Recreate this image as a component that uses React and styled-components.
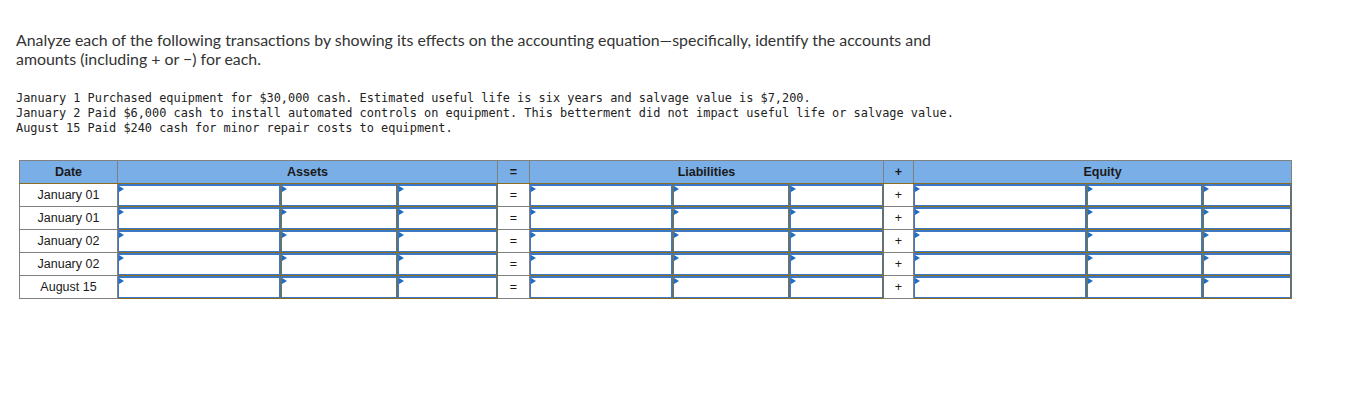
import React from 'react'
import styled, {createGlobalStyle} from 'styled-components'

const GlobalStyle = createGlobalStyle`
  body {
    margin: 0;
    background: #ffffff;
  }
`

const Page = styled.div`
  padding: 30px 16px 0 16px;
  font-family: Lato, 'Open Sans', Arial, sans-serif;
  color: #333333;
`

const Intro = styled.p`
  margin: 0;
  font-size: 15.9px;
  line-height: 19px;
  max-width: 935px;
`

const Transactions = styled.pre`
  margin: 23px 0 0 0;
  font-family: 'DejaVu Sans Mono', 'Liberation Mono', monospace;
  font-size: 11.9px;
  line-height: 15px;
  color: #222222;
`

const Table = styled.table`
  margin: 24px 0 0 3px;
  border-collapse: collapse;
  table-layout: fixed;
  width: 1272px;
  border: 1px solid #808080;
  font-family: 'Liberation Sans', Arial, sans-serif;
  font-size: 12.5px;
  color: #1a1a1a;
`

const Head = styled.th`
  background: #7aaee6;
  height: 22px;
  padding: 0;
  font-weight: bold;
  text-align: center;
  border: 1px solid #808080;
  border-bottom-color: #8b6d1f;
`

const DateCell = styled.td`
  height: 22px;
  padding: 0;
  text-align: center;
  border: 1px solid #808080;
  background: #ffffff;
`

const SignCell = styled.td`
  padding: 0;
  text-align: center;
  border: 1px solid #808080;
  border-left-color: #8b6d1f;
  background: #ffffff;
`

const InputCell = styled.td`
  padding: 0;
  height: 22px;
  border: 1px solid #8b6d1f;
  background: #ffffff;
`

const Field = styled.div`
  position: relative;
  box-sizing: border-box;
  height: 22px;
  border: 1px solid #3b78c6;
  border-top-width: 2px;
  background: #ffffff;

  &::before {
    content: '';
    position: absolute;
    top: 0;
    left: 0;
    width: 0;
    height: 0;
    border-top: 3px solid transparent;
    border-bottom: 3px solid transparent;
    border-left: 5px solid #1f6cc4;
  }
`

const widths = [98, 163, 117, 100, 32, 143, 117, 94, 30, 173, 116, 89]

const rows = ['January 01', 'January 01', 'January 02', 'January 02', 'August 15']

const Inputs = ({count}) => (
  <>
    {Array.from({length: count}).map((_, i) => (
      <InputCell key={i}><Field /></InputCell>
    ))}
  </>
)

export default function App() {
  return (
    <Page>
      <GlobalStyle />
      <Intro>
        Analyze each of the following transactions by showing its effects on the accounting equation—specifically, identify the accounts and amounts (including + or −) for each.
      </Intro>
      <Transactions>{`January 1 Purchased equipment for $30,000 cash. Estimated useful life is six years and salvage value is $7,200.
January 2 Paid $6,000 cash to install automated controls on equipment. This betterment did not impact useful life or salvage value.
August 15 Paid $240 cash for minor repair costs to equipment.`}</Transactions>
      <Table>
        <colgroup>
          {widths.map((w, i) => <col key={i} style={{width: w}} />)}
        </colgroup>
        <thead>
          <tr>
            <Head>Date</Head>
            <Head colSpan={3}>Assets</Head>
            <Head>=</Head>
            <Head colSpan={3}>Liabilities</Head>
            <Head>+</Head>
            <Head colSpan={3}>Equity</Head>
          </tr>
        </thead>
        <tbody>
          {rows.map((date, i) => (
            <tr key={i}>
              <DateCell>{date}</DateCell>
              <Inputs count={3} />
              <SignCell>=</SignCell>
              <Inputs count={3} />
              <SignCell>+</SignCell>
              <Inputs count={3} />
            </tr>
          ))}
        </tbody>
      </Table>
    </Page>
  )
}
